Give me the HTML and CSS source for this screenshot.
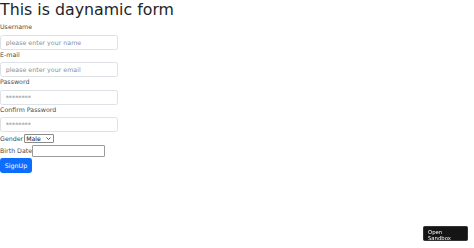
FILE: index.html
```html
<!DOCTYPE html>
<html>
<head>
<meta charset="utf-8">
<link rel="stylesheet" href="styles.css">
</head>
<body>
<div class="app">
  <h1 class="title">This is daynamic form</h1>
  <div class="field">
    <label class="form-label">Username</label>
    <input class="form-control" type="text" placeholder="please enter your name">
  </div>
  <div class="field">
    <label class="form-label">E-mail</label>
    <input class="form-control" type="email" placeholder="please enter your email">
  </div>
  <div class="field">
    <label class="form-label">Password</label>
    <input class="form-control" type="password" placeholder="********">
  </div>
  <div class="field">
    <label class="form-label">Confirm Password</label>
    <input class="form-control" type="password" placeholder="********">
  </div>
  <div class="inline-row gender-row">
    <label class="inline-label">Gender</label>
    <span class="select-wrap">
      <select class="plain-select">
        <option>Male</option>
        <option>Female</option>
      </select>
      <svg class="chevron" viewBox="0 0 10 6" width="5" height="3"><path d="M1 1 L5 5 L9 1" fill="none" stroke="#333" stroke-width="1.6"/></svg>
    </span>
  </div>
  <div class="inline-row date-row">
    <label class="inline-label">Birth Date</label>
    <input class="plain-input" type="text">
  </div>
  <button class="btn-primary" type="button">SignUp</button>
</div>
<a class="sandbox-btn">Open Sandbox</a>
</body>
</html>
```
FILE: styles.css
```css
html, body {
  margin: 0;
  padding: 0;
  background: #fff;
}
body {
  font-family: "DejaVu Sans", sans-serif;
  color: #4a4d50;
  font-size: 6.3px;
  line-height: 9.5px;
}
.app {
  display: flex;
  flex-direction: column;
  align-items: flex-start;
}
.title {
  font-size: 15.8px;
  line-height: 19px;
  font-weight: 400;
  color: #212529;
  margin: 0 0 3px 0;
}
.field {
  display: flex;
  flex-direction: column;
  align-items: flex-start;
}
.form-label {
  display: block;
  margin-bottom: 3px;
}
.form-control {
  box-sizing: border-box;
  width: 118px;
  height: 15px;
  padding: 0 4.7px;
  margin: 0;
  font-family: "DejaVu Sans", sans-serif;
  font-size: 6.3px;
  color: #212529;
  background: #fff;
  border: 0.5px solid #dee2e6;
  border-radius: 2.4px;
  outline: none;
}
.form-control::placeholder {
  color: #8a8f94;
  opacity: 1;
}
.inline-row {
  display: flex;
  align-items: center;
}
.gender-row {
  margin-top: 1.5px;
  height: 10px;
}
.date-row {
  margin-top: 1px;
  height: 13px;
}
.select-wrap {
  position: relative;
  display: inline-flex;
  margin-left: 0.5px;
}
.plain-select {
  -webkit-appearance: none;
  appearance: none;
  box-sizing: border-box;
  width: 30px;
  height: 8.5px;
  margin: 0;
  padding: 0 0 0 1.5px;
  font-family: "DejaVu Sans", sans-serif;
  font-size: 6.2px;
  line-height: 7px;
  color: #222;
  background: #fff;
  border: 0.6px solid #8a8a8a;
  border-radius: 1px;
}
.chevron {
  position: absolute;
  right: 3px;
  top: 3px;
  pointer-events: none;
}
.plain-input {
  box-sizing: border-box;
  width: 73px;
  height: 12px;
  margin: 0;
  padding: 0;
  background: #fff;
  border: 0.8px solid #9a9a9a;
  border-radius: 1px;
}
.btn-primary {
  margin-top: 0;
  box-sizing: border-box;
  width: 32px;
  height: 15px;
  padding: 0;
  font-family: "DejaVu Sans", sans-serif;
  font-size: 6.3px;
  color: #fff;
  background: #0d6efd;
  border: none;
  border-radius: 2.4px;
}
.sandbox-btn {
  position: fixed;
  right: 6px;
  bottom: 7px;
  box-sizing: border-box;
  width: 45px;
  height: 15px;
  padding: 1.5px 4px;
  font-family: "DejaVu Sans", sans-serif;
  font-size: 5.3px;
  line-height: 6px;
  color: #fff;
  background: #151515;
  border: 0.5px solid #333;
  border-radius: 1.5px;
  word-spacing: 40px;
}
```
